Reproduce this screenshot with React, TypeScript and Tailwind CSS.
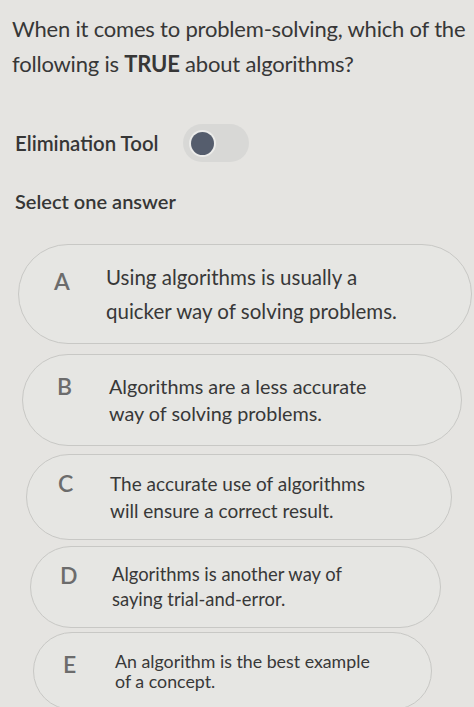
import React from "react";

type Option = {
  letter: string;
  lines: string[];
  card: string;
  pad: string;
  size: string;
  letterShift?: string;
};

const options: Option[] = [
  {
    letter: "A",
    lines: ["Using algorithms is usually a", "quicker way of solving problems."],
    card: "ml-[18px] mr-[2px] h-[100px]",
    pad: "pl-[35px]",
    size: "text-[20.5px] leading-[34px]",
    letterShift: "mt-[8px]",
  },
  {
    letter: "B",
    lines: ["Algorithms are a less accurate", "way of solving problems."],
    card: "ml-[22px] mr-[12px] h-[92px] mt-[10px]",
    pad: "pl-[34px]",
    size: "text-[19.8px] leading-[27px]",
  },
  {
    letter: "C",
    lines: ["The accurate use of algorithms", "will ensure a correct result."],
    card: "ml-[26px] mr-[22px] h-[86px] mt-[8px]",
    pad: "pl-[31px]",
    size: "text-[19px] leading-[27px]",
  },
  {
    letter: "D",
    lines: ["Algorithms is another way of", "saying trial-and-error."],
    card: "ml-[30px] mr-[33px] h-[82px] mt-[6px]",
    pad: "pl-[29px]",
    size: "text-[18.4px] leading-[25px]",
  },
  {
    letter: "E",
    lines: ["An algorithm is the best example", "of a concept."],
    card: "ml-[33px] mr-[42px] h-[78px] mt-[4px]",
    pad: "pl-[29px]",
    size: "text-[17.8px] leading-[20px]",
  },
];

const AnswerCard = ({ option }: { option: Option }) => (
  <div
    className={`flex items-center rounded-full border border-[#c8c8c5] bg-[#e6e6e3] ${option.card} ${option.pad}`}
  >
    <div className="flex items-start">
      <span
        className={`w-[52px] shrink-0 text-[23px] font-semibold leading-[27px] text-[#6c6c6c] ${option.letterShift ?? ""}`}
      >
        {option.letter}
      </span>
      <p className={`text-[#383838] ${option.size}`}>
        {option.lines.map((line) => (
          <span key={line} className="block whitespace-nowrap">
            {line}
          </span>
        ))}
      </p>
    </div>
  </div>
);

export default function App() {
  return (
    <div
      className="h-[707px] w-[474px] overflow-hidden bg-[#e5e4e1] text-[#333]"
      style={{ fontFamily: "Lato, 'Open Sans', sans-serif" }}
    >
      <div className="flex flex-col pt-[11px]">
        <h1 className="ml-[12px] whitespace-nowrap text-[22px] leading-[35px] tracking-[-0.2px] text-[#373737]">
          When it comes to problem-solving, which of the
          <br />
          following is <span className="font-bold">TRUE</span> about algorithms?
        </h1>

        <div className="mt-[43px] ml-[15px] flex items-center gap-[24px]">
          <span className="text-[20.4px] font-semibold text-[#363636]">Elimination Tool</span>
          <div className="flex h-[38px] w-[66px] items-center rounded-full bg-[#d8d8d6] pl-[8px]">
            <div className="h-[23px] w-[23px] rounded-full bg-[#555d6d] ring-2 ring-[#ececea]" />
          </div>
        </div>

        <p className="mt-[24px] ml-[15px] text-[20px] font-semibold text-[#363636]">
          Select one answer
        </p>

        <div className="mt-[28px] flex flex-col">
          {options.map((o) => (
            <AnswerCard key={o.letter} option={o} />
          ))}
        </div>
      </div>
    </div>
  );
}
